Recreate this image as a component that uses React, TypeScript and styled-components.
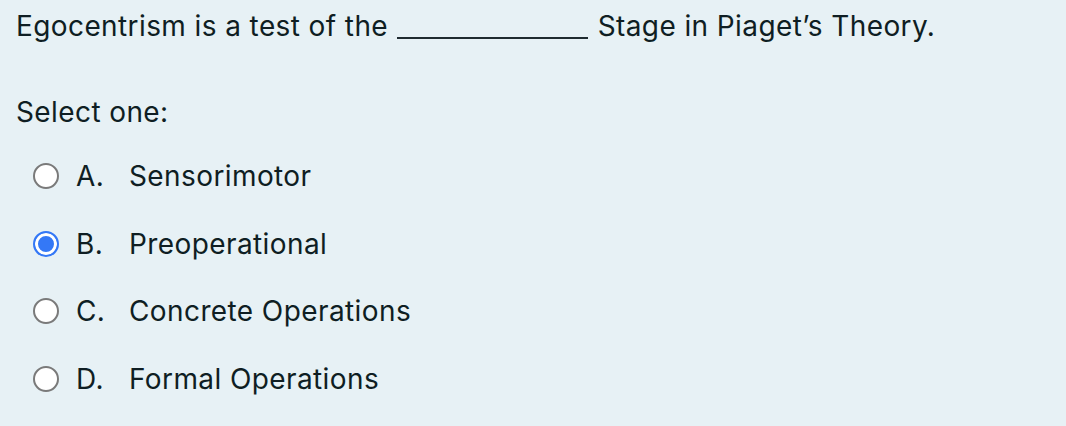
import styled, { createGlobalStyle } from "styled-components";

const GlobalStyle = createGlobalStyle`
  html, body {
    margin: 0;
    padding: 0;
    background-color: #e7f1f5;
  }
  body {
    font-family: Inter, "Noto Sans", "Liberation Sans", sans-serif;
    color: #0f1e23;
  }
`;

const options = [
  { letter: "A.", text: "Sensorimotor" },
  { letter: "B.", text: "Preoperational" },
  { letter: "C.", text: "Concrete Operations" },
  { letter: "D.", text: "Formal Operations" },
];

const App = () => {
  const selected = 1;
  return (
    <>
      <GlobalStyle />
      <StyledQuestion>
        <StyledPrompt>
          Egocentrism is a test of the <StyledBlank /> Stage in Piaget’s Theory.
        </StyledPrompt>
        <StyledSelect>Select one:</StyledSelect>
        <StyledOptions>
          {options.map((o, i) => (
            <StyledOption key={o.letter}>
              <StyledRadio $checked={i === selected} />
              <StyledLetter>{o.letter}</StyledLetter>
              <span>{o.text}</span>
            </StyledOption>
          ))}
        </StyledOptions>
      </StyledQuestion>
    </>
  );
};

export default App;

const StyledQuestion = styled.div`
  width: 1066px;
  height: 426px;
  box-sizing: border-box;
  padding: 8px 16px 0;
  display: flex;
  flex-direction: column;
  font-size: 28px;
  letter-spacing: 0.4px;
`;

const StyledPrompt = styled.div`
  line-height: 36px;
  white-space: nowrap;
`;

const StyledBlank = styled.span`
  display: inline-block;
  width: 191px;
  height: 2px;
  background-color: #1f2b30;
  vertical-align: -3px;
  margin: 0 1px;
`;

const StyledSelect = styled.div`
  margin-top: 50px;
  line-height: 36px;
`;

const StyledOptions = styled.div`
  margin-top: 28px;
  display: flex;
  flex-direction: column;
  gap: 31.7px;
`;

const StyledOption = styled.div`
  display: flex;
  align-items: center;
  height: 36px;
  padding-left: 17px;
`;

const StyledRadio = styled.span<{ $checked: boolean }>`
  width: 26px;
  height: 26px;
  box-sizing: border-box;
  border-radius: 50%;
  flex-shrink: 0;
  background-color: ${({ $checked }) => ($checked ? "#3478f6" : "#ffffff")};
  border: ${({ $checked }) =>
    $checked ? "2px solid #3478f6" : "2px solid #7a7a7a"};
  box-shadow: ${({ $checked }) => ($checked ? "inset 0 0 0 3px #ffffff" : "none")};
  margin-right: 17px;
`;

const StyledLetter = styled.span`
  width: 53px;
`;
